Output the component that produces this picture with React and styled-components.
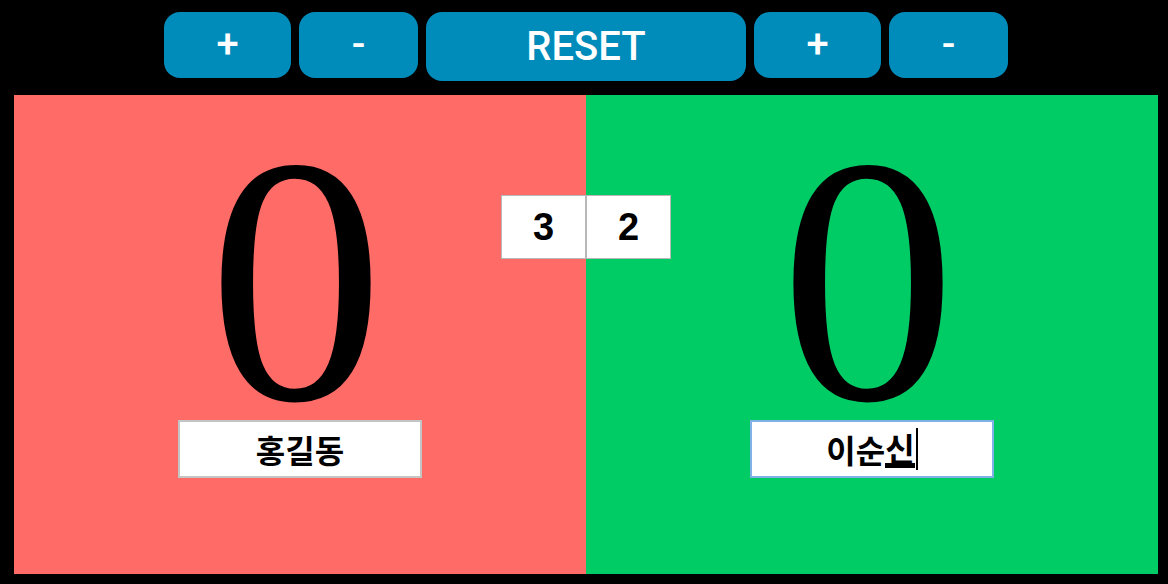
import React from "react";
import styled, { createGlobalStyle } from "styled-components";

const GlobalStyle = createGlobalStyle`
  html, body {
    margin: 0;
    padding: 0;
    background: #000;
  }
`;

const Page = styled.div`
  width: 1168px;
  height: 584px;
  background: #000;
  overflow: hidden;
`;

const Controls = styled.div`
  display: flex;
  justify-content: center;
  align-items: flex-start;
  gap: 8px;
  padding: 12px 0 0 4px;
  height: 83px;
  box-sizing: border-box;
`;

const Button = styled.button`
  width: ${(p) => p.$w}px;
  height: ${(p) => p.$h || 66}px;
  border: none;
  border-radius: 16px;
  background: #008cba;
  color: #fff;
  font-family: Roboto, "Noto Sans", sans-serif;
  font-size: 40px;
  font-weight: 500;
  line-height: 1;
  padding: 0;
  display: flex;
  align-items: center;
  justify-content: center;
`;

const Board = styled.div`
  position: relative;
  margin: 12px 10px 0 14px;
  height: 479px;
  display: grid;
  grid-template-columns: 572px 572px;
`;

const Side = styled.div`
  background: ${(p) => p.$color};
  display: flex;
  flex-direction: column;
  align-items: center;
  padding-top: 46px;
`;

const Score = styled.div`
  font-family: "Liberation Serif", "Times New Roman", serif;
  font-size: 352px;
  line-height: 279px;
  color: #000;
  margin-left: -8px;
`;

const NameBox = styled.div`
  width: 244px;
  height: 58px;
  box-sizing: border-box;
  background: #fff;
  border: 2px solid ${(p) => (p.$focused ? "#7fb0e6" : "#c4c4c4")};
  display: flex;
  align-items: center;
  justify-content: center;
  font-family: "Noto Sans CJK KR", "Noto Sans", sans-serif;
  font-weight: 700;
  font-size: 32px;
  color: #000;
`;

const Composing = styled.span`
  border-bottom: 5px solid #000;
  line-height: 1;
`;

const Caret = styled.span`
  display: inline-block;
  width: 2px;
  height: 42px;
  background: #000;
  margin-left: 1px;
`;

const SetScores = styled.div`
  position: absolute;
  top: 100px;
  left: 487px;
  display: flex;
`;

const SetBox = styled.div`
  width: 85px;
  height: 64px;
  box-sizing: border-box;
  background: #fff;
  border: 1px solid #b8b8b8;
  display: flex;
  align-items: center;
  justify-content: center;
  font-family: "Liberation Sans", Arial, sans-serif;
  font-weight: 700;
  font-size: 38px;
  color: #000;
`;

export default function App() {
  return (
    <Page>
      <GlobalStyle />
      <Controls>
        <Button $w={127}>+</Button>
        <Button $w={119}>-</Button>
        <Button $w={320} $h={69}>RESET</Button>
        <Button $w={127}>+</Button>
        <Button $w={119}>-</Button>
      </Controls>
      <Board>
        <Side $color="#ff6b66">
          <Score>0</Score>
          <NameBox>홍길동</NameBox>
        </Side>
        <Side $color="#00cc66">
          <Score>0</Score>
          <NameBox $focused>
            이순<Composing>신</Composing>
            <Caret />
          </NameBox>
        </Side>
        <SetScores>
          <SetBox>3</SetBox>
          <SetBox>2</SetBox>
        </SetScores>
      </Board>
    </Page>
  );
}
